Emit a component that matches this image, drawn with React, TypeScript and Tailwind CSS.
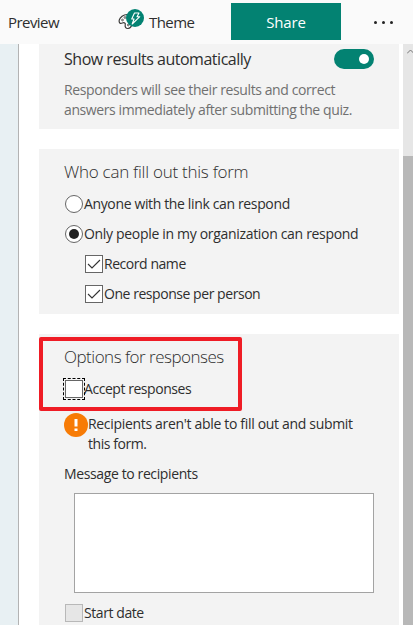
import type { ReactNode } from "react";
import { clsx } from "clsx";

function ThemeIcon() {
    return (
        <svg width="27" height="22" viewBox="0 0 27 22" fill="none" className="shrink-0">
            <path
                d="M9 5.500C5.500 5.500 2 8 1.200 11.200C.7 13.800 2.200 15 4.300 14C6.300 13.200 7.800 14 7.200 16C6.800 18.300 8 19.700 10 19.500C12 19.300 13.200 17.900 13.800 16V6z"
                fill="#fff"
                stroke="#3b3a39"
                strokeWidth="1.200"
            />
            <circle cx="4.500" cy="11" r="0.900" stroke="#3b3a39" strokeWidth="0.800" />
            <circle cx="7" cy="8.500" r="0.900" stroke="#3b3a39" strokeWidth="0.800" />
            <circle cx="10.300" cy="16" r="0.900" stroke="#3b3a39" strokeWidth="0.800" />
            <circle cx="17" cy="9" r="9" fill="#038272" />
            <path
                d="M16.500 4h4.500l-2 3.700h2.800l-7.600 7.300 1.800-5h-2.300z"
                stroke="#fff"
                strokeWidth="1.100"
                strokeLinejoin="round"
            />
        </svg>
    );
}

function Header() {
    return (
        <header className="flex h-11 shrink-0 items-start bg-[#fafafa] pt-[3px] text-[15px] leading-[39px] tracking-[-0.55px]">
            <button className="ml-[8px] w-[110px] text-left text-[#2e2e2e]">Preview</button>
            <button className="flex w-[113px] items-start text-[#2e2e2e]">
                <span className="mt-[6px] w-[31px]">
                    <ThemeIcon />
                </span>
                <span>Theme</span>
            </button>
            <button className="h-[37px] w-[110px] bg-[#038272] text-center tracking-[-0.2px] text-white">Share</button>
            <button aria-label="More options" className="ml-[33px] flex h-[38px] items-center gap-[5px]">
                <span className="h-[3px] w-[3px] rounded-full bg-[#222]" />
                <span className="h-[3px] w-[3px] rounded-full bg-[#222]" />
                <span className="h-[3px] w-[3px] rounded-full bg-[#222]" />
            </button>
        </header>
    );
}

interface OptionProps {
    type: "radio" | "checkbox";
    checked?: boolean;
    disabled?: boolean;
    focused?: boolean;
    className?: string;
    children: ReactNode;
}

function Option({ type, checked, disabled, focused, className, children }: OptionProps) {
    return (
        <div className={clsx("flex h-[30px] items-center", className)}>
            <span
                className={clsx(
                    "relative mx-[1px] flex h-[18px] w-[18px] shrink-0 items-center justify-center border",
                    type === "radio" && "rounded-full",
                    disabled ? "border-[#b8b8b8] bg-[#e6e6e6]" : "border-[#666] bg-white",
                )}
            >
                {type === "radio" && checked && <span className="h-[10px] w-[10px] rounded-full bg-[#212121]" />}
                {type === "checkbox" && checked && (
                    <svg width="14" height="14" viewBox="0 0 14 14" fill="none">
                        <path d="M1 7l4 4 8-8" stroke="#333" strokeWidth="1.100" />
                    </svg>
                )}
                {focused && <span className="absolute -inset-[3px] border border-dashed border-black" />}
            </span>
            <span className="pb-px">{children}</span>
        </div>
    );
}

function Panel({ className, children }: { className?: string; children: ReactNode }) {
    return <section className={clsx("shrink-0 bg-[#f3f3f3] pl-[25px]", className)}>{children}</section>;
}

function Scrollbar() {
    return (
        <div className="w-[10px] shrink-0 bg-[#e6e6e6]">
            <div className="h-[112px] pt-[5px] pl-[4px]">
                <svg width="6" height="6" viewBox="0 0 6 6" fill="none">
                    <path d="M0 4.500L3.500 1L7 4.500" stroke="#777" />
                </svg>
            </div>
            <div className="h-[469px] bg-[#b8b8b8]" />
        </div>
    );
}

export default function App() {
    return (
        <div className="flex h-[625px] w-[413px] flex-col overflow-hidden bg-white font-['Open_Sans',sans-serif] text-[14px] tracking-[-0.32px] text-[#2e2e2e]">
            <Header />
            <div className="flex min-h-0 flex-1 overflow-hidden">
                <div className="w-[19px] shrink-0 border-r border-[#b3b3b3] bg-[#e8f0f3]" />
                <main className="ml-5 mr-1 flex w-[360px] shrink-0 flex-col gap-5">
                    <Panel className="h-[85px]">
                        <div className="flex h-[30px] items-center">
                            <h2 className="w-[270px] text-[16px] tracking-[-0.48px]">Show results automatically</h2>
                            <span className="flex h-5 w-10 items-center justify-end rounded-full bg-[#038272] pr-[5px]">
                                <span className="h-[10px] w-[10px] rounded-full bg-white" />
                            </span>
                        </div>
                        <p className="mt-[6px] leading-5 tracking-[-0.4px] whitespace-nowrap text-[#707070]">
                            Responders will see their results and correct
                            <br />
                            answers immediately after submitting the quiz.
                        </p>
                    </Panel>

                    <Panel className="h-[165px] pt-[8px]">
                        <h2 className="h-8 text-[17px] leading-[30px] font-light tracking-[-0.25px]">Who can fill out this form</h2>
                        <Option type="radio" className="tracking-[-0.36px]">Anyone with the link can respond</Option>
                        <Option type="radio" checked>Only people in my organization can respond</Option>
                        <Option type="checkbox" checked className="pl-5 tracking-[-0.45px]">Record name</Option>
                        <Option type="checkbox" checked className="pl-5 tracking-[-0.45px]">One response per person</Option>
                    </Panel>

                    <Panel className="relative h-[300px] pt-[8px]">
                        <h2 className="h-8 text-[17px] leading-[30px] font-light tracking-[-0.5px]">Options for responses</h2>
                        <Option type="checkbox" focused className="tracking-[-0.45px]">Accept responses</Option>
                        <div className="mt-[9px] flex items-start">
                            <svg width="24" height="24" viewBox="0 0 24 24" className="shrink-0">
                                <circle cx="12" cy="12" r="12" fill="#f77b05" />
                                <path d="M12 6v7.500M12 15.500v2.500" stroke="#fff" strokeWidth="3" />
                            </svg>
                            <p className="pt-px leading-5 whitespace-nowrap">
                                Recipients aren't able to fill out and submit
                                <br />
                                <span className="tracking-[-0.45px]">this form.</span>
                            </p>
                        </div>
                        <label className="mt-[10px] block leading-5 tracking-[-0.38px]">Message to recipients</label>
                        <textarea className="mt-[9px] ml-[10px] block h-[100px] w-[300px] resize-none border border-[#a3a3a3] bg-white" />
                        <Option type="checkbox" disabled className="mt-[5px] tracking-[-0.42px]">Start date</Option>
                        <div className="absolute top-[3px] left-0 h-[74px] w-[203px] rounded-[2px] border-4 border-[#ef1c25]" />
                    </Panel>
                </main>
                <Scrollbar />
            </div>
        </div>
    );
}
